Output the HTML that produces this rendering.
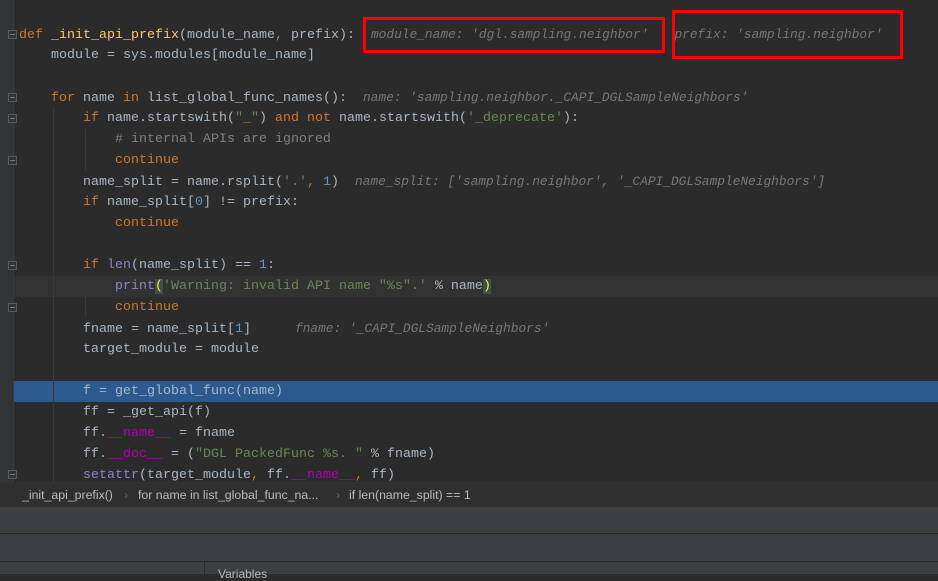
<!DOCTYPE html>
<html><head><meta charset="utf-8"><style>
body{margin:0;width:938px;height:574px;overflow:hidden;background:#2b2b2b;position:relative;font-family:"Liberation Mono",monospace}
#gut{position:absolute;left:0;top:0;width:13px;height:482px;background:#313335;border-right:1px solid #3a3a3a}
.ln{position:absolute;left:19px;top:0;height:21px;line-height:22px;font-size:13.33px;color:#a9b7c6;white-space:pre}
.row{position:absolute;left:14px;right:0;height:21px}
.k{color:#cc7832}.s{color:#6a8759}.c{color:#808080}.n{color:#6897bb}.b{color:#8888c6}.m{color:#b200b2}.f{color:#ffc66d}
.h{color:#787878;font-style:italic;font-size:12.85px}
.guide{position:absolute;width:1px;background:#393939}
.fold{position:absolute;left:8px;width:9px;height:9px;border:1px solid #5a5a5a;box-sizing:border-box;background:#313335}
.fold:after{content:"";position:absolute;left:1px;top:3px;width:5px;height:1px;background:#777}
.red{position:absolute;border:3px solid #f00;box-sizing:border-box}
</style></head><body>
<div id="gut"></div>
<div class="row" style="top:276px;background:#323232"></div>
<div class="row" style="top:381px;background:#2d5a8e"></div>
<div class="guide" style="left:53px;top:108px;height:376px"></div>
<div class="guide" style="left:85px;top:129px;height:42px"></div>
<div class="guide" style="left:85px;top:297px;height:20px"></div>
<div class="fold" style="top:30px"></div>
<div class="fold" style="top:93px"></div>
<div class="fold" style="top:114px"></div>
<div class="fold" style="top:156px"></div>
<div class="fold" style="top:261px"></div>
<div class="fold" style="top:303px"></div>
<div class="fold" style="top:470px"></div>

<div class="ln" style="top:24px"><span class="k">def</span> <span class="f">_init_api_prefix</span>(module_name<span class="k">,</span> prefix):  <span class="h">module_name: 'dgl.sampling.neighbor'</span>  <span class="h" style="padding-left:10px">prefix: 'sampling.neighbor'</span></div>
<div class="ln" style="top:45px">    module = sys.modules[module_name]</div>
<div class="ln" style="top:87px">    <span class="k">for</span> name <span class="k">in</span> list_global_func_names():  <span class="h">name: 'sampling.neighbor._CAPI_DGLSampleNeighbors'</span></div>
<div class="ln" style="top:108px">        <span class="k">if</span> name.startswith(<span class="s">"_"</span>) <span class="k">and not</span> name.startswith(<span class="s">'_deprecate'</span>):</div>
<div class="ln" style="top:129px">            <span class="c"># internal APIs are ignored</span></div>
<div class="ln" style="top:150px">            <span class="k">continue</span></div>
<div class="ln" style="top:171px">        name_split = name.rsplit(<span class="s">'.'</span><span class="k">,</span> <span class="n">1</span>)  <span class="h">name_split: ['sampling.neighbor', '_CAPI_DGLSampleNeighbors']</span></div>
<div class="ln" style="top:192px">        <span class="k">if</span> name_split[<span class="n">0</span>] != prefix:</div>
<div class="ln" style="top:213px">            <span class="k">continue</span></div>
<div class="ln" style="top:255px">        <span class="k">if</span> <span class="b">len</span>(name_split) == <span class="n">1</span>:</div>
<div class="ln" style="top:276px">            <span class="b">print</span><span style="color:#ffef28;background:#3b514d">(</span><span class="s">'Warning: invalid API name "%s".'</span> % name<span style="color:#ffef28;background:#3b514d">)</span></div>
<div class="ln" style="top:297px">            <span class="k">continue</span></div>
<div class="ln" style="top:318px">        fname = name_split[<span class="n">1</span>]  <span class="h" style="padding-left:28px">fname: '_CAPI_DGLSampleNeighbors'</span></div>
<div class="ln" style="top:339px">        target_module = module</div>
<div class="ln" style="top:381px">        f = get_global_func(name)</div>
<div class="ln" style="top:402px">        ff = _get_api(f)</div>
<div class="ln" style="top:423px">        ff.<span class="m">__name__</span> = fname</div>
<div class="ln" style="top:444px">        ff.<span class="m">__doc__</span> = (<span class="s">"DGL PackedFunc %s. "</span> % fname)</div>
<div class="ln" style="top:465px">        <span class="b">setattr</span>(target_module<span class="k">,</span> ff.<span class="m">__name__</span><span class="k">,</span> ff)</div>

<div class="red" style="left:363px;top:17px;width:302px;height:36px"></div>
<div class="red" style="left:672px;top:10px;width:231px;height:49px"></div>

<div style="position:absolute;left:0;top:482px;width:938px;height:24px;background:#2f2f2f;border-top:1px solid #323232;font-family:'Liberation Sans',sans-serif;font-size:12.3px;color:#bbb;line-height:24px;white-space:pre"><span style="position:absolute;left:22px">_init_api_prefix()</span><span style="position:absolute;left:124px;color:#666">›</span><span style="position:absolute;left:138px">for name in list_global_func_na...</span><span style="position:absolute;left:336px;color:#666">›</span><span style="position:absolute;left:349px">if len(name_split) == 1</span></div>
<div style="position:absolute;left:0;top:507px;width:938px;height:26px;background:#3c3f41;border-bottom:1px solid #2b2b2b"></div>
<div style="position:absolute;left:0;top:534px;width:938px;height:27px;background:#3c3f41;border-bottom:1px solid #2b2b2b"></div>
<div style="position:absolute;left:0;top:562px;width:938px;height:12px;background:#3c3f41"></div>
<div style="position:absolute;left:204px;top:562px;width:1px;height:12px;background:#2b2b2b"></div>
<div style="position:absolute;left:218px;top:567px;font-family:'Liberation Sans',sans-serif;font-size:12px;color:#bbb">Variables</div>
</body></html>
